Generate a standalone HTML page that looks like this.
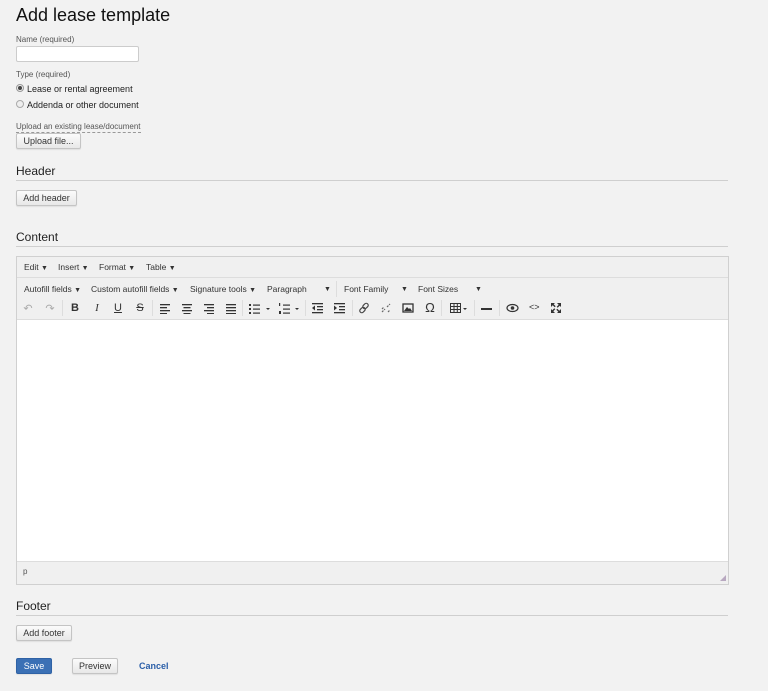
<!DOCTYPE html>
<html><head><meta charset="utf-8"><style>
*{box-sizing:border-box;margin:0;padding:0}
body{width:768px;height:691px;background:#f2f2f2;font-family:"Liberation Sans",Arial,sans-serif;color:#333;position:relative;overflow:hidden}
.a{position:absolute;white-space:nowrap}
.lbl{font-size:8px;color:#555}
.btn{position:absolute;border:1px solid #c4c4c4;border-radius:2px;background:linear-gradient(#fbfbfb,#e8e8e8);font-size:9px;color:#333;text-align:center;line-height:14px;box-shadow:0 1px 1px rgba(0,0,0,.08)}
h2{position:absolute;font-size:12px;font-weight:normal;color:#222}
.hr{position:absolute;left:16px;width:712px;height:1px;background:#cfcfcf}
.m{font-size:8.5px;color:#333}
.c{font-size:7px;color:#333}
.i{position:absolute;font-size:11px;color:#333;text-align:center;width:14px}
.sep{position:absolute;width:1px;height:16px;background:#ddd}
</style></head><body>
<div class="a" style="left:16px;top:5px;font-size:18px;color:#111">Add lease template</div>
<div class="a lbl" style="left:16px;top:35px">Name (required)</div>
<div class="a" style="left:16px;top:46px;width:123px;height:16px;background:#fff;border:1px solid #ccc;border-radius:2px"></div>
<div class="a lbl" style="left:16px;top:70px">Type (required)</div>
<div class="a" style="left:16px;top:84px;width:8px;height:8px;border-radius:50%;border:1px solid #999;background:#eee"><div style="width:4px;height:4px;margin:1px;border-radius:50%;background:#444"></div></div>
<div class="a" style="left:27px;top:84px;font-size:9px;color:#222">Lease or rental agreement</div>
<div class="a" style="left:16px;top:100px;width:8px;height:8px;border-radius:50%;border:1px solid #aaa;background:#eee"></div>
<div class="a" style="left:27px;top:100px;font-size:9px;color:#222">Addenda or other document</div>
<div class="a lbl" style="left:16px;top:122px;border-bottom:1px dashed #999;line-height:10px">Upload an existing lease/document</div>
<div class="btn" style="left:16px;top:133px;width:65px;height:16px">Upload file...</div>
<h2 style="left:16px;top:164px">Header</h2>
<div class="hr" style="top:180px"></div>
<div class="btn" style="left:16px;top:190px;width:61px;height:16px">Add header</div>
<h2 style="left:16px;top:230px">Content</h2>
<div class="hr" style="top:246px"></div>

<div class="a" style="left:16px;top:256px;width:713px;height:329px;border:1px solid #d0d0d0;background:#f0f0f0">
 <div class="a" style="left:0;top:20px;width:711px;height:1px;background:#ddd"></div>
 <div class="a" style="left:0;top:62px;width:711px;height:243px;background:#fff;border-top:1px solid #ddd;border-bottom:1px solid #ddd"></div>
 <div class="a" style="left:6px;top:310px;font-size:8px;color:#555">p</div>
 <div class="a" style="left:703px;top:318px;width:0;height:0;border-left:6px solid transparent;border-bottom:6px solid #b8a8c0"></div>
</div>
<div class="a m" style="left:24px;top:262px">Edit <span class="c">▼</span></div>
<div class="a m" style="left:58px;top:262px">Insert <span class="c">▼</span></div>
<div class="a m" style="left:99px;top:262px">Format <span class="c">▼</span></div>
<div class="a m" style="left:146px;top:262px">Table <span class="c">▼</span></div>

<div class="a m" style="left:24px;top:284px">Autofill fields <span class="c">▼</span></div>
<div class="a m" style="left:91px;top:284px">Custom autofill fields <span class="c">▼</span></div>
<div class="a m" style="left:190px;top:284px">Signature tools <span class="c">▼</span></div>
<div class="a m" style="left:267px;top:284px">Paragraph</div><div class="a c" style="left:324px;top:286px">▼</div>
<div class="sep" style="left:336px;top:281px"></div>
<div class="a m" style="left:344px;top:284px">Font Family</div><div class="a c" style="left:401px;top:286px">▼</div>
<div class="a m" style="left:418px;top:284px">Font Sizes</div><div class="a c" style="left:475px;top:286px">▼</div>

<div class="i" style="left:21px;top:302px;color:#aaa">↶</div>
<div class="i" style="left:43px;top:302px;color:#aaa">↷</div>
<div class="sep" style="left:62px;top:300px"></div>
<div class="i" style="left:68px;top:302px;font-weight:bold">B</div>
<div class="i" style="left:90px;top:302px;font-style:italic;font-family:'Liberation Serif'">I</div>
<div class="i" style="left:111px;top:302px;text-decoration:underline">U</div>
<div class="i" style="left:133px;top:302px;text-decoration:line-through">S</div>
<div class="sep" style="left:152px;top:300px"></div>
<svg class="a" style="left:158px;top:302px" width="90" height="12" fill="#333">
<g><rect x="2" y="2" width="10" height="1.3"/><rect x="2" y="5" width="7" height="1.3"/><rect x="2" y="8" width="10" height="1.3"/><rect x="2" y="11" width="7" height="1"/></g>
<g transform="translate(22,0)"><rect x="2" y="2" width="10" height="1.3"/><rect x="3.5" y="5" width="7" height="1.3"/><rect x="2" y="8" width="10" height="1.3"/><rect x="3.5" y="11" width="7" height="1"/></g>
<g transform="translate(44,0)"><rect x="2" y="2" width="10" height="1.3"/><rect x="5" y="5" width="7" height="1.3"/><rect x="2" y="8" width="10" height="1.3"/><rect x="5" y="11" width="7" height="1"/></g>
<g transform="translate(66,0)"><rect x="2" y="2" width="10" height="1.3"/><rect x="2" y="5" width="10" height="1.3"/><rect x="2" y="8" width="10" height="1.3"/><rect x="2" y="11" width="10" height="1"/></g>
</svg>
<div class="sep" style="left:242px;top:300px"></div>
<svg class="a" style="left:248px;top:302px" width="60" height="12" fill="#333">
<rect x="1" y="2" width="2" height="2"/><rect x="5" y="2.5" width="7" height="1.2"/><rect x="1" y="6" width="2" height="2"/><rect x="5" y="6.5" width="7" height="1.2"/><rect x="1" y="10" width="2" height="2"/><rect x="5" y="10.5" width="7" height="1.2"/>
<path d="M18 6h4l-2 2z"/>
<g transform="translate(30,0)"><rect x="1" y="1" width="1.2" height="3"/><rect x="1" y="9" width="2" height="3"/><rect x="5" y="2.5" width="7" height="1.2"/><rect x="5" y="6.5" width="7" height="1.2"/><rect x="5" y="10.5" width="7" height="1.2"/></g>
<path d="M47 6h4l-2 2z"/>
</svg>
<div class="sep" style="left:305px;top:300px"></div>
<svg class="a" style="left:311px;top:302px" width="40" height="12" fill="#333">
<rect x="1" y="1" width="11" height="1.3"/><rect x="6" y="4" width="6" height="1.3"/><rect x="6" y="7" width="6" height="1.3"/><rect x="1" y="10" width="11" height="1.3"/><path d="M4 3.5v5l-3-2.5z"/>
<g transform="translate(22,0)"><rect x="1" y="1" width="11" height="1.3"/><rect x="6" y="4" width="6" height="1.3"/><rect x="6" y="7" width="6" height="1.3"/><rect x="1" y="10" width="11" height="1.3"/><path d="M1 3.5v5l3-2.5z"/></g>
</svg>
<div class="sep" style="left:352px;top:300px"></div>
<svg class="a" style="left:358px;top:302px" width="12" height="12" fill="none" stroke="#444" stroke-width="1.2"><rect x="5.5" y="1" width="4" height="6" rx="2" transform="rotate(45 7.5 4)"/><rect x="2.5" y="5" width="4" height="6" rx="2" transform="rotate(45 4.5 8)"/></svg>
<svg class="a" style="left:380px;top:302px" width="12" height="12" fill="none" stroke="#666" stroke-width="1.2" stroke-dasharray="2 1"><path d="M2 10l3-3M7 5l3-3M2 7l2-2M8 10l2-2"/></svg>
<svg class="a" style="left:402px;top:302px" width="12" height="12"><rect x="1" y="2" width="10" height="8" fill="none" stroke="#333" stroke-width="1.3"/><path d="M2 9l3-4 2 2 1-1 2 3z" fill="#333"/></svg>
<div class="i" style="left:423px;top:300px;font-size:13px">Ω</div>
<div class="sep" style="left:441px;top:300px"></div>
<svg class="a" style="left:449px;top:302px" width="22" height="12" fill="none" stroke="#333" stroke-width="1"><rect x="1.5" y="1.5" width="10" height="9"/><path d="M1.5 4.5h10M1.5 7.5h10M5 1.5v9M8.3 1.5v9"/><path d="M14 6h4l-2 2z" fill="#333" stroke="none"/></svg>
<div class="sep" style="left:474px;top:300px"></div>
<div class="a" style="left:481px;top:308px;width:11px;height:1.5px;background:#333"></div>
<div class="sep" style="left:499px;top:300px"></div>
<svg class="a" style="left:506px;top:303px" width="13" height="10"><ellipse cx="6.5" cy="5" rx="5.5" ry="3.5" fill="none" stroke="#333" stroke-width="1.2"/><circle cx="6.5" cy="5" r="1.8" fill="#333"/></svg>
<div class="a" style="left:529px;top:302px;font-size:9px;color:#333">&lt;&gt;</div>
<svg class="a" style="left:550px;top:302px" width="12" height="12" fill="#333"><path d="M1 1h4l-1.3 1.3 2 2-1 1-2-2L1 5zM11 1v4L9.7 3.7l-2 2-1-1 2-2L7 1zM1 11V7l1.3 1.3 2-2 1 1-2 2L5 11zM11 11H7l1.3-1.3-2-2 1-1 2 2L11 7z"/></svg>

<h2 style="left:16px;top:599px">Footer</h2>
<div class="hr" style="top:615px"></div>
<div class="btn" style="left:16px;top:625px;width:56px;height:16px">Add footer</div>
<div class="btn" style="left:16px;top:658px;width:36px;height:16px;background:#3b70b5;border-color:#2f62a5;color:#fff">Save</div>
<div class="btn" style="left:72px;top:658px;width:46px;height:16px">Preview</div>
<div class="a" style="left:139px;top:661px;font-size:9px;font-weight:bold;color:#2a5ea8">Cancel</div>
</body></html>
